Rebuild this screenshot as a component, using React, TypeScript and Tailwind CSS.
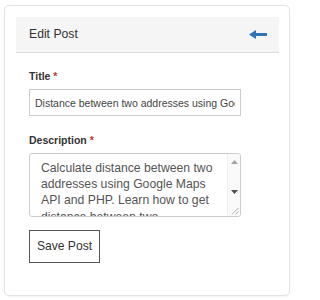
export default function App() {
  return (
    <div className="w-[294px] h-[300px] bg-white pl-[4px] pt-[5px] font-['Liberation_Sans',Arial,sans-serif] text-[#333]">
      <div className="w-[286px] h-[291px] rounded-[5px] border border-[#e3e3e3] shadow-[0_1px_2px_rgba(0,0,0,0.05)] pt-[11px] pl-[11px] pr-[10px]">
        <div className="h-[36px] bg-[#f5f5f5] border-b border-[#dddddd] flex items-center justify-between pl-[13px] pr-[12px]">
          <span className="text-[12.2px] leading-none">Edit Post</span>
          <svg width="18" height="9" viewBox="0 0 18 9" className="block">
            <polygon points="0,4.5 7,0 7,9" fill="#2f75b5" />
            <rect x="6" y="3" width="12" height="3" fill="#2f75b5" />
          </svg>
        </div>
        <div className="pl-[13px] pt-[16px]">
          <label className="block text-[10.5px] leading-[15px] font-bold">
            Title <span className="text-[#c0392b]">*</span>
          </label>
          <input
            readOnly
            value="Distance between two addresses using Google Maps API and PHP"
            className="mt-[5px] block w-[212px] h-[27px] border border-[#cccccc] px-[5px] text-[10.5px] text-[#444] outline-none bg-white"
          />
          <label className="block mt-[17px] text-[10.5px] leading-[15px] font-bold">
            Description <span className="text-[#c0392b]">*</span>
          </label>
          <div className="mt-[5px] w-[212px] h-[64px] border border-[#cccccc] rounded-[3px] bg-white flex overflow-hidden">
            <div className="flex-1 overflow-hidden pl-[11px] pr-[10px] pt-[6px] text-[12.2px] leading-[16.2px] text-[#555]">
              Calculate distance between two addresses using Google Maps API and PHP. Learn how to get distance between two addresses.
            </div>
            <div className="w-[13px] bg-[#fafafa] border-l border-[#f0f0f0] flex flex-col items-center">
              <svg width="7" height="4" viewBox="0 0 7 4" className="mt-[6px]">
                <polygon points="0,4 3.5,0 7,4" fill="#a3a3a3" />
              </svg>
              <div className="flex-1" />
              <svg width="7" height="4" viewBox="0 0 7 4" className="mb-[13px]">
                <polygon points="0,0 7,0 3.5,4" fill="#505050" />
              </svg>
              <svg width="8" height="8" viewBox="0 0 8 8" className="self-end mb-[1px] mr-[1px]">
                <line x1="1" y1="7.5" x2="7.5" y2="1" stroke="#9a9a9a" strokeWidth="0.8" />
                <line x1="4.5" y1="7.5" x2="7.5" y2="4.5" stroke="#9a9a9a" strokeWidth="0.8" />
              </svg>
            </div>
          </div>
          <button className="mt-[13px] block w-[71px] h-[33px] border border-[#555] text-[12.1px] text-[#333] bg-white">
            Save Post
          </button>
        </div>
      </div>
    </div>
  );
}
